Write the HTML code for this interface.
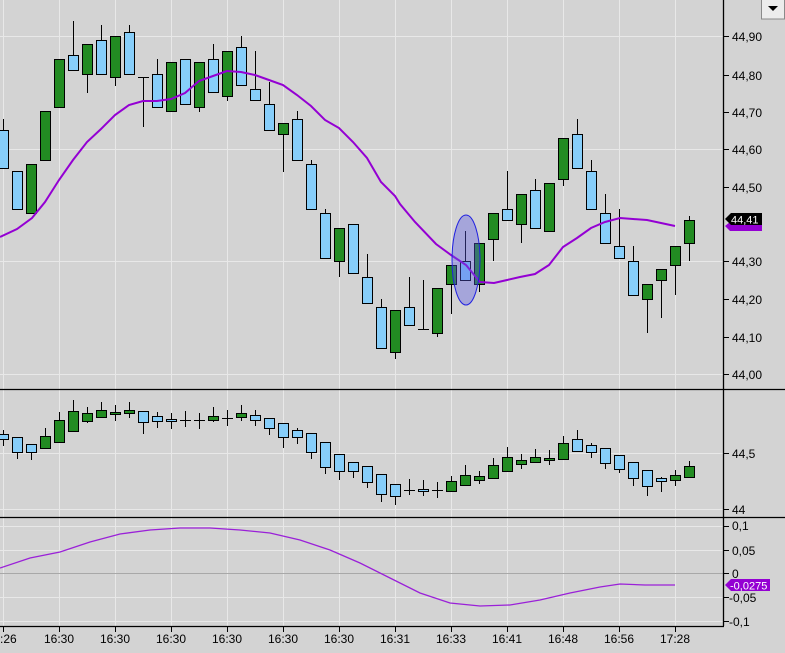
<!DOCTYPE html>
<html><head><meta charset="utf-8"><style>
html,body{margin:0;padding:0;background:#d3d3d3;}
svg{display:block;font-family:"Liberation Sans",sans-serif;}
.t{font-size:12px;fill:#000;}
</style></head><body>
<svg width="785" height="653" viewBox="0 0 785 653" xmlns="http://www.w3.org/2000/svg">
<rect width="785" height="653" fill="#d3d3d3"/>
<g stroke="#e8e8e8" stroke-width="1">
<path d="M3.5 0V626M59.5 0V626M115.5 0V626M171.5 0V626M227.5 0V626M283.5 0V626M339.5 0V626M395.5 0V626M451.5 0V626M507.5 0V626M563.5 0V626M619.5 0V626M675.5 0V626"/>
<path d="M0 36.5H723M0 149.5H723M0 261.5H723M0 374.5H723M0 453.5H723M0 509.5H723M0 526.5H723M0 550.5H723M0 597.5H723M0 621.5H723"/>
</g>
<path d="M0 573.5H723" stroke="#a8a8a8"/>
<g stroke="#000" stroke-width="1">
<path d="M3.5 119V130M73.5 21V55M87.5 74V93M101.5 25V40M115.5 77V86M129.5 25V32M143.5 77V127M138 77.5H149M157.5 59V74M199.5 107V112M213.5 44V59M227.5 96V101M241.5 36V47M255.5 51V89M269.5 82V104M283.5 134V172M297.5 111V119M311.5 160V164M325.5 209V213M339.5 261V277M367.5 254V277M381.5 299V307M395.5 352V359M409.5 277V307M423.5 280V329M418 329.5H429M437.5 333V337M451.5 284V314M465.5 231V261M479.5 284V292M493.5 239V261M507.5 171V209M521.5 224V243M535.5 179V190M563.5 179V186M577.5 119V134M591.5 160V171M605.5 194V213M619.5 209V246M633.5 246V261M647.5 299V333M661.5 280V318M675.5 265V295M689.5 216V220M689.5 243V261"/>
<g fill="#87cefa">
<rect x="-1.5" y="130.5" width="10" height="38"/><rect x="12.5" y="171.5" width="10" height="38"/><rect x="68.5" y="55.5" width="10" height="15"/><rect x="96.5" y="40.5" width="10" height="34"/><rect x="124.5" y="32.5" width="10" height="42"/><rect x="152.5" y="74.5" width="10" height="33"/><rect x="180.5" y="59.5" width="10" height="45"/><rect x="208.5" y="59.5" width="10" height="33"/><rect x="236.5" y="47.5" width="10" height="38"/><rect x="250.5" y="89.5" width="10" height="11"/><rect x="264.5" y="104.5" width="10" height="26"/><rect x="292.5" y="119.5" width="10" height="41"/><rect x="306.5" y="164.5" width="10" height="45"/><rect x="320.5" y="213.5" width="10" height="45"/><rect x="348.5" y="224.5" width="10" height="49"/><rect x="362.5" y="277.5" width="10" height="26"/><rect x="376.5" y="307.5" width="10" height="41"/><rect x="404.5" y="307.5" width="10" height="18"/><rect x="460.5" y="261.5" width="10" height="19"/><rect x="502.5" y="209.5" width="10" height="11"/><rect x="530.5" y="190.5" width="10" height="38"/><rect x="572.5" y="134.5" width="10" height="34"/><rect x="586.5" y="171.5" width="10" height="38"/><rect x="600.5" y="213.5" width="10" height="30"/><rect x="614.5" y="246.5" width="10" height="12"/><rect x="628.5" y="261.5" width="10" height="34"/>
</g>
<g fill="#228b22">
<rect x="26.5" y="164.5" width="10" height="49"/><rect x="40.5" y="111.5" width="10" height="49"/><rect x="54.5" y="59.5" width="10" height="48"/><rect x="82.5" y="44.5" width="10" height="30"/><rect x="110.5" y="36.5" width="10" height="41"/><rect x="166.5" y="62.5" width="10" height="49"/><rect x="194.5" y="62.5" width="10" height="45"/><rect x="222.5" y="51.5" width="10" height="45"/><rect x="278.5" y="123.5" width="10" height="11"/><rect x="334.5" y="228.5" width="10" height="33"/><rect x="390.5" y="310.5" width="10" height="42"/><rect x="432.5" y="288.5" width="10" height="45"/><rect x="446.5" y="265.5" width="10" height="19"/><rect x="474.5" y="243.5" width="10" height="41"/><rect x="488.5" y="213.5" width="10" height="26"/><rect x="516.5" y="194.5" width="10" height="30"/><rect x="544.5" y="183.5" width="10" height="48"/><rect x="558.5" y="138.5" width="10" height="41"/><rect x="642.5" y="284.5" width="10" height="15"/><rect x="656.5" y="269.5" width="10" height="11"/><rect x="670.5" y="246.5" width="10" height="19"/><rect x="684.5" y="220.5" width="10" height="23"/>
</g>
</g>
<polyline fill="none" stroke="#9400d3" stroke-width="2" points="0,237 17,229 32,218 45,202 59,180 73,160 87,142 101,129 115,115 129,105 143,101 157,101 171,99 185,93 199,81 213,76 227,71 241,72 255,75 269,80 283,85 297,95 311,106 325,120 339,128 353,142 367,158 381,182 395,196 400,204 415,222 436,244 451,255 466,265 480,282 494,283 520,277 535,274 549,265 563,247 577,238 591,228 605,222 620,218 633,219 647,220 661,223 675,226"/>
<ellipse cx="466" cy="260" rx="14" ry="45" fill="rgba(90,90,230,0.38)" stroke="#2020e0" stroke-width="1"/>
<g stroke="#000" stroke-width="1">
<path d="M3.5 430V446M17.5 452V459M31.5 452V460M45.5 428V436M59.5 412V420M73.5 400V411M87.5 407V423M101.5 402V410M115.5 405V421M129.5 402V418M143.5 422V434M157.5 412V428M171.5 413V429M185.5 411V427M180 420.5H191M199.5 413V429M194 420.5H205M213.5 407V422M227.5 410V426M222 418.5H233M241.5 405V421M255.5 410V426M269.5 428V435M283.5 437V448M297.5 428V444M311.5 452V459M325.5 467V474M339.5 471V480M353.5 471V478M367.5 482V488M381.5 494V502M395.5 496V505M409.5 479V495M404 490.5H415M423.5 480V496M437.5 482V498M432 490.5H443M451.5 476V481M465.5 465V475M479.5 471V484M493.5 458V465M507.5 447V457M521.5 454V469M535.5 449V457M549.5 450V465M563.5 436V443M577.5 430V439M591.5 443V458M605.5 463V469M619.5 469V473M633.5 478V486M647.5 486V496M661.5 477V492M675.5 470V486M689.5 461V466"/>
<g fill="#87cefa">
<rect x="-1.5" y="434.5" width="10" height="5"/><rect x="12.5" y="437.5" width="10" height="15"/><rect x="26.5" y="444.5" width="10" height="8"/><rect x="138.5" y="411.5" width="10" height="11"/><rect x="152.5" y="416.5" width="10" height="5"/><rect x="166.5" y="419.5" width="10" height="2"/><rect x="250.5" y="415.5" width="10" height="5"/><rect x="264.5" y="418.5" width="10" height="10"/><rect x="278.5" y="423.5" width="10" height="14"/><rect x="292.5" y="430.5" width="10" height="7"/><rect x="306.5" y="433.5" width="10" height="19"/><rect x="320.5" y="442.5" width="10" height="25"/><rect x="334.5" y="454.5" width="10" height="17"/><rect x="348.5" y="462.5" width="10" height="9"/><rect x="362.5" y="466.5" width="10" height="16"/><rect x="376.5" y="474.5" width="10" height="20"/><rect x="390.5" y="484.5" width="10" height="12"/><rect x="418.5" y="489.5" width="10" height="2"/><rect x="572.5" y="439.5" width="10" height="12"/><rect x="586.5" y="445.5" width="10" height="7"/><rect x="600.5" y="448.5" width="10" height="15"/><rect x="614.5" y="455.5" width="10" height="14"/><rect x="628.5" y="462.5" width="10" height="16"/><rect x="642.5" y="470.5" width="10" height="16"/><rect x="656.5" y="478.5" width="10" height="3"/>
</g>
<g fill="#228b22">
<rect x="40.5" y="436.5" width="10" height="12"/><rect x="54.5" y="420.5" width="10" height="22"/><rect x="68.5" y="411.5" width="10" height="20"/><rect x="82.5" y="413.5" width="10" height="8"/><rect x="96.5" y="410.5" width="10" height="7"/><rect x="110.5" y="412.5" width="10" height="2"/><rect x="124.5" y="410.5" width="10" height="3"/><rect x="208.5" y="416.5" width="10" height="4"/><rect x="236.5" y="413.5" width="10" height="4"/><rect x="446.5" y="481.5" width="10" height="10"/><rect x="460.5" y="475.5" width="10" height="10"/><rect x="474.5" y="476.5" width="10" height="4"/><rect x="488.5" y="465.5" width="10" height="13"/><rect x="502.5" y="457.5" width="10" height="14"/><rect x="516.5" y="460.5" width="10" height="4"/><rect x="530.5" y="457.5" width="10" height="5"/><rect x="544.5" y="458.5" width="10" height="2"/><rect x="558.5" y="443.5" width="10" height="16"/><rect x="670.5" y="475.5" width="10" height="5"/><rect x="684.5" y="466.5" width="10" height="11"/>
</g>
</g>
<polyline fill="none" stroke="#9a20d8" stroke-width="1.3" points="0,568 30,558 60,552 90,542 120,534 150,530 180,528 210,528 240,530 270,533 300,540 330,550 360,563 390,578 420,593 450,603 480,606 510,605 540,600 570,593 600,587 620,584 645,585 675,585"/>
<g stroke="#000" stroke-width="1.3">
<path d="M0 389.5H785M0 517.5H785M0 626.5H724M723.5 0V626"/>
</g>
<g stroke="#000" stroke-width="1">
<path d="M724 36.5H729M724 75.5H729M724 112.5H729M724 149.5H729M724 187.5H729M724 261.5H729M724 299.5H729M724 337.5H729M724 374.5H729M724 453.5H729M724 509.5H729M724 526.5H729M724 550.5H729M724 573.5H729M724 597.5H729M724 621.5H729"/>
<path d="M3.5 626V632M59.5 626V632M115.5 626V632M171.5 626V632M227.5 626V632M283.5 626V632M339.5 626V632M395.5 626V632M451.5 626V632M507.5 626V632M563.5 626V632M619.5 626V632M675.5 626V632"/>
</g>
<g class="t">
<text x="732" y="41">44,90</text><text x="732" y="80">44,80</text><text x="732" y="117">44,70</text><text x="732" y="154">44,60</text><text x="732" y="192">44,50</text><text x="732" y="266">44,30</text><text x="732" y="304">44,20</text><text x="732" y="342">44,10</text><text x="732" y="379">44,00</text>
<text x="732" y="458">44,5</text><text x="732" y="514">44</text>
<text x="732" y="530">0,1</text><text x="732" y="555">0,05</text><text x="732" y="578">0</text><text x="729" y="602">-0,05</text><text x="729" y="626">-0,1</text>
<text x="0" y="643">:26</text>
</g>
<g class="t" text-anchor="middle">
<text x="59" y="643">16:30</text><text x="115" y="643">16:30</text><text x="171" y="643">16:30</text><text x="227" y="643">16:30</text><text x="283" y="643">16:30</text><text x="339" y="643">16:30</text><text x="395" y="643">16:31</text><text x="451" y="643">16:33</text><text x="507" y="643">16:41</text><text x="563" y="643">16:48</text><text x="619" y="643">16:56</text><text x="675" y="643">17:28</text>
</g>
<path d="M725 226 L730 222 H762 V231 H730 Z" fill="#9400d3"/>
<path d="M725 219 L731 213 H762 V225 H731 Z" fill="#000"/>
<text x="731" y="223.5" fill="#fff" font-size="11">44,41</text>
<path d="M725 585 L731 579 H770 V591 H731 Z" fill="#9400d3"/>
<text x="730" y="589.5" fill="#fff" font-size="11">-0,0275</text>
<rect x="761.5" y="-1" width="23" height="20" fill="#ececec" stroke="#8a8a8a"/>
<path d="M768 6 H778 L773 11 Z" fill="#000"/>
</svg>
</body></html>
